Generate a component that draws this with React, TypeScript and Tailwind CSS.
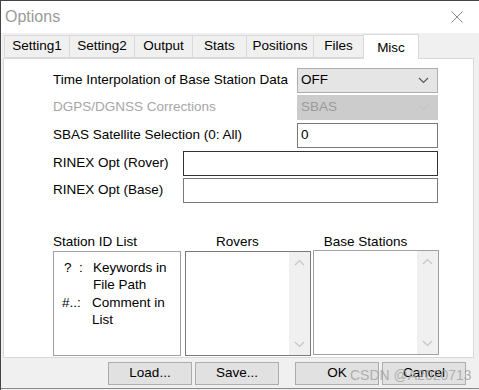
import { useState } from "react";

const tabs = [
  { name: "Setting1", w: "w-[65px]" },
  { name: "Setting2", w: "w-[65px]" },
  { name: "Output", w: "w-[58px]" },
  { name: "Stats", w: "w-[54px]" },
  { name: "Positions", w: "w-[67px]" },
  { name: "Files", w: "w-[50px]" },
];

function Chevron({ up, light }: { up?: boolean; light?: boolean }) {
  return (
    <svg width="11" height="7" viewBox="0 0 11 7" className="block">
      <path
        d={up ? "M1 6 L5.5 1.5 L10 6" : "M1 1 L5.5 5.5 L10 1"}
        fill="none"
        stroke={light ? "#c4c4c4" : "#555"}
        strokeWidth="1.1"
      />
    </svg>
  );
}

function ListBox({ dark }: { dark?: boolean }) {
  return (
    <div className={"flex h-[105px] w-[126px] bg-white border " + (dark ? "border-[#7a7a7a]" : "border-[#a0a0a0]")}>
      <div className="flex-1" />
      <div className="flex w-[21px] flex-col items-center justify-between bg-[#f0f0f0] py-[7px]">
        <Chevron up light />
        <Chevron light />
      </div>
    </div>
  );
}

function Btn({ label }: { label: string }) {
  return (
    <button className="flex h-[23px] w-[84px] items-center justify-center border border-[#adadad] bg-[#e1e1e1] text-[13.5px] text-black">
      {label}
    </button>
  );
}

export default function App() {
  const [active] = useState("Misc");

  return (
    <div
      className="relative h-[390px] w-[479px] overflow-hidden border-l border-t border-[#444] bg-[#f0f0f0] text-black"
      style={{ fontFamily: '"Liberation Sans", Arial, sans-serif' }}
    >
      {/* title bar */}
      <div className="flex h-[32px] items-center justify-between bg-white pl-[4px] pr-[16px]">
        <span className="text-[16px] text-[#9a9a9a]">Options</span>
        <svg width="12" height="12" viewBox="0 0 12 12">
          <path d="M0.5 0.5 L11.5 11.5 M11.5 0.5 L0.5 11.5" stroke="#8a8a8a" strokeWidth="1" />
        </svg>
      </div>

      {/* tabs */}
      <div className="flex items-end pl-[3px] pt-[1px]">
        {tabs.map((t) => (
          <div
            key={t.name}
            className={"flex h-[23px] items-center justify-center border border-r-0 border-[#d9d9d9] bg-[#f0f0f0] text-[13.5px] " + t.w}
          >
            {t.name}
          </div>
        ))}
        <div className="relative z-10 -mb-px flex h-[25px] w-[56px] items-start justify-center border border-b-0 border-[#d9d9d9] bg-white pt-[3px] text-[13.5px]">
          {active}
        </div>
      </div>

      {/* panel */}
      <div className="ml-[2px] h-[300px] w-[471px] border border-[#d9d9d9] bg-white pl-[49px] pt-[9px] text-[13.5px]">
        <div className="flex w-[385px] flex-col">
          <div className="flex h-[25px] items-center justify-between">
            <span>Time Interpolation of Base Station Data</span>
            <div className="flex h-[25px] w-[141px] items-center justify-between border border-[#adadad] bg-[#e5e5e5] pl-[3px] pr-[8px]">
              <span>OFF</span>
              <Chevron />
            </div>
          </div>
          <div className="mt-[2px] flex h-[25px] items-center justify-between">
            <span className="text-[#a6a6a6]">DGPS/DGNSS Corrections</span>
            <div className="flex h-[25px] w-[141px] items-center justify-between border border-[#cccccc] bg-[#cccccc] pl-[3px] pr-[8px] text-[#9a9a9a]">
              <span>SBAS</span>
              <Chevron light />
            </div>
          </div>
          <div className="mt-[3px] flex h-[25px] items-center justify-between">
            <span>SBAS Satellite Selection (0: All)</span>
            <div className="flex h-[25px] w-[141px] items-center border border-[#7a7a7a] bg-white pl-[3px]">0</div>
          </div>
          <div className="mt-[3px] flex h-[25px] items-center justify-between">
            <span>RINEX Opt (Rover)</span>
            <div className="h-[25px] w-[255px] border border-[#333]" />
          </div>
          <div className="mt-[2px] flex h-[25px] items-center justify-between">
            <span>RINEX Opt (Base)</span>
            <div className="h-[25px] w-[255px] border border-[#7a7a7a]" />
          </div>
        </div>

        <div className="mt-[31px] flex items-start">
          <div className="flex w-[128px] flex-col">
            <span className="h-[16px] leading-[16px]">Station ID List</span>
            <div className="mt-px h-[105px] border border-[#a0a0a0] pt-[7px] leading-[17px]">
              <div className="flex">
                <span className="w-[39px] pl-[10px]">?&nbsp;&nbsp;:</span>
                <span>
                  Keywords in
                  <br />
                  File Path
                </span>
              </div>
              <div className="mt-[1px] flex">
                <span className="w-[38px] pl-[8px]">#..:</span>
                <span>
                  Comment in
                  <br />
                  List
                </span>
              </div>
            </div>
          </div>
          <div className="ml-[4px] flex w-[126px] flex-col">
            <span className="h-[16px] pr-[21px] text-center leading-[16px]">Rovers</span>
            <div className="mt-px">
              <ListBox dark />
            </div>
          </div>
          <div className="ml-[2px] flex w-[126px] flex-col">
            <span className="h-[16px] pr-[21px] text-center leading-[16px]">Base Stations</span>
            <ListBox />
          </div>
        </div>
      </div>

      {/* buttons */}
      <div className="flex h-[31px] items-center border-b border-[#8a8a8a] pl-[107px] pt-px">
        <Btn label="Load..." />
        <div className="ml-[3px]">
          <Btn label="Save..." />
        </div>
        <div className="ml-[16px]">
          <Btn label="OK" />
        </div>
        <div className="ml-[3px]">
          <Btn label="Cancel" />
        </div>
      </div>

      {/* watermark */}
      <span className="pointer-events-none absolute left-[349px] top-[364px] whitespace-nowrap text-[14px] text-[#a0a0a0]/80">
        CSDN @A2020713
      </span>
    </div>
  );
}
